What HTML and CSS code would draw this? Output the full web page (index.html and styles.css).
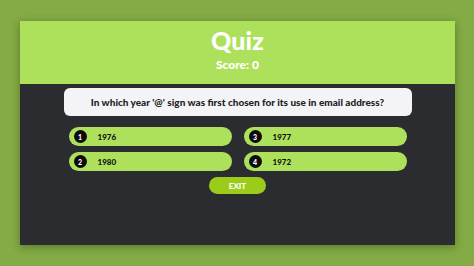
FILE: index.html
```html
<!DOCTYPE html>
<html>
<head>
<meta charset="utf-8">
<link rel="stylesheet" href="styles.css">
</head>
<body>
<div class="card">
  <header class="head">
    <h1 class="title">Quiz</h1>
    <div class="score">Score: 0</div>
  </header>
  <main class="body">
    <div class="question">In which year '@' sign was first chosen for its use in email address?</div>
    <div class="options">
      <div class="opt"><span class="num">1</span><span class="txt">1976</span></div>
      <div class="opt"><span class="num">3</span><span class="txt">1977</span></div>
      <div class="opt"><span class="num">2</span><span class="txt">1980</span></div>
      <div class="opt"><span class="num">4</span><span class="txt">1972</span></div>
    </div>
    <button class="exit">EXIT</button>
  </main>
</div>
</body>
</html>
```
FILE: styles.css
```css
html, body { margin: 0; padding: 0; }
body {
  width: 474px; height: 266px; overflow: hidden;
  background: #84ab45;
  font-family: Lato, "Open Sans", sans-serif;
  box-sizing: border-box;
  padding: 21px 19px 0 20px;
}
.card {
  width: 435px; height: 224px;
  display: flex; flex-direction: column;
  box-shadow: 0 2px 8px rgba(40,60,10,0.45);
}
.head {
  height: 63px;
  background: #aee15b;
  display: flex; flex-direction: column; align-items: center;
}
.title {
  margin: 5px 0 0; color: #fff;
  font-size: 25px; font-weight: 900; line-height: 28px; letter-spacing: 0.2px;
}
.score {
  margin-top: 4px; color: #fff; font-size: 12px; font-weight: 900; line-height: 14px;
}
.body {
  flex: 1; background: #2b2c30;
  display: flex; flex-direction: column; align-items: center;
  padding-top: 4px;
}
.question {
  width: 348px; height: 28px; box-sizing: border-box;
  background: #f4f4f6; border-radius: 6px;
  display: flex; align-items: center; justify-content: center;
  color: #222326; font-size: 10px; font-weight: 900;
}
.options {
  margin-top: 11px; width: 338px;
  display: grid; grid-template-columns: 163px 163px; column-gap: 12px; row-gap: 6px;
}
.opt {
  height: 19px; border-radius: 10px; background: #aee15b;
  display: flex; align-items: center; padding-left: 5px;
}
.num {
  width: 13px; height: 13px; border-radius: 50%; background: #0c0c0c;
  color: #fff; font-size: 7px; font-weight: 900;
  display: flex; align-items: center; justify-content: center;
}
.txt { margin-left: 11px; font-size: 8px; font-weight: 900; color: #111; }
.exit {
  margin-top: 6px; width: 57px; height: 17px; border: 0; border-radius: 9px;
  background: #9ccc1a; color: #fff; font-family: inherit; font-size: 8px; font-weight: 900;
  padding: 0;
}
```
